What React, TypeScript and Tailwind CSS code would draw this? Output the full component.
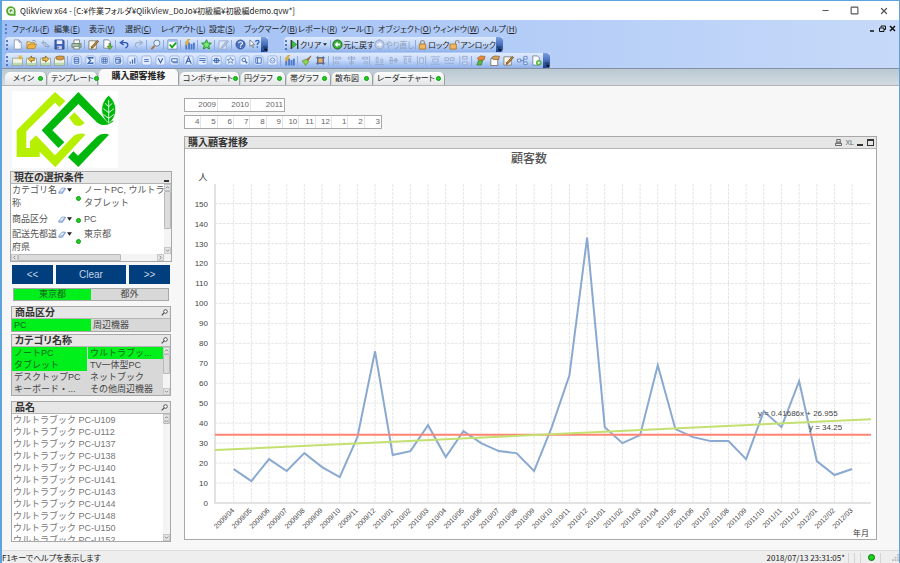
import { useState } from 'react'
import type { ReactNode } from 'react'
import { Minus, Square, X } from 'lucide-react'

const menus = [
  { label: 'ファイル', key: 'F', width: 'w-[42px]' },
  { label: '編集', key: 'E', width: 'w-[35px]' },
  { label: '表示', key: 'V', width: 'w-[36px]' },
  { label: '選択', key: 'C', width: 'w-[36px]' },
  { label: 'レイアウト', key: 'L', width: 'w-[48px]' },
  { label: '設定', key: 'S', width: 'w-[35px]' },
  { label: 'ブックマーク', key: 'B', width: 'w-[54px]' },
  { label: 'レポート', key: 'R', width: 'w-[43px]' },
  { label: 'ツール', key: 'T', width: 'w-[37px]' },
  { label: 'オブジェクト', key: 'O', width: 'w-[55px]' },
  { label: 'ウィンドウ', key: 'W', width: 'w-[50px]' },
  { label: 'ヘルプ', key: 'H', width: 'w-[41px]' },
]

const tabs = [
  { label: 'メイン', width: 'w-[42px]' },
  { label: 'テンプレート', width: 'w-[50px]' },
  { label: '購入顧客推移', width: 'w-[80px]' },
  { label: 'コンボチャート', width: 'w-[60px]' },
  { label: '円グラフ', width: 'w-[45px]' },
  { label: '帯グラフ', width: 'w-[44px]' },
  { label: '散布図', width: 'w-[41px]' },
  { label: 'レーダーチャート', width: 'w-[71px]' },
]

const months = [4, 5, 6, 7, 8, 9, 10, 11, 12, 1, 2, 3]

const products = ['109', '112', '137', '138', '140', '141', '143', '144', '148', '150', '152']

const customers = [
  17, 11, 22, 16, 25, 18, 13, 33, 76, 24, 26, 39, 23, 36, 30, 26, 25, 16,
  38, 64, 133, 38, 30, 34, 69, 37, 33, 31, 31, 22, 46, 38, 61, 21, 14, 17,
]

// ---- toolbar icons, all on a 12x12 grid ----

const boxed = (glyph: ReactNode) => (
  <>
    <rect x="1" y="1" width="10" height="10" rx="2" fill="#e3edff" stroke="#8aa8dc" strokeWidth=".8" />
    <g stroke="#3f69b5" fill="none" strokeWidth="1">{glyph}</g>
  </>
)

const sheet = (extra: ReactNode) => (
  <>
    <path d="M.5 3.500h11V11.500H.5z" fill="#f4f3df" stroke="#7d8a74" strokeWidth=".7" />
    <path d="M1 8.500h10V11H1z" fill="#b9d8b4" />
    {extra}
  </>
)

const align = (glyph: ReactNode) => (
  <g stroke="#8ea2c9" fill="#c9d8f3" strokeWidth=".8">{glyph}</g>
)

const icons: Record<string, ReactNode> = {
  newDoc: <path d="M2.500 1h5l2.500 2.500V11h-7.500zM7.500 1v2.500H10" fill="#fff" stroke="#7b8aa6" strokeWidth=".8" />,
  open: (
    <>
      <path d="M1 10V3h3l1 1h4v2" fill="#f7d98a" stroke="#a77c22" strokeWidth=".8" />
      <path d="M1 10.500l2-5h8.500l-2 5z" fill="#f2b640" stroke="#a77c22" strokeWidth=".8" />
      <path d="M7 2c1.500-1 3-.5 3.500 1" fill="none" stroke="#5d6f86" strokeWidth=".8" />
    </>
  ),
  reload: <path d="M4.500 1.500L2 4l2.500 2.500M2.500 4h4v2M7.500 5.500L10 8l-2.500 2.500M9.500 8h-4V6" fill="none" stroke="#8b9dbd" strokeWidth="1" />,
  save: (
    <>
      <path d="M1 1h9l1 1v9H1z" fill="#3f62b8" stroke="#23408a" strokeWidth=".8" />
      <path d="M3 1.500h6v4H3z" fill="#e9effb" />
      <path d="M3.500 7.500h5V11h-5z" fill="#c4cfe6" />
      <path d="M4.500 8.500v2" stroke="#23408a" />
    </>
  ),
  print: (
    <>
      <path d="M3.500 1h6L9 5H3z" fill="#fff" stroke="#5a6a60" strokeWidth=".8" />
      <path d="M1 5h10v4H1z" fill="#b4c6b0" stroke="#5c6e62" strokeWidth=".8" />
      <path d="M3 8h6v3H3z" fill="#f3f7f0" stroke="#5c6e62" strokeWidth=".8" />
      <path d="M8 6.500h2" stroke="#27a02c" />
    </>
  ),
  edit: (
    <>
      <path d="M1 2h8v9H1z" fill="#fdf9ec" stroke="#6e6a5c" strokeWidth=".8" />
      <path d="M2.500 8h3" stroke="#c79a55" strokeWidth=".8" />
      <path d="M4 8.500l6-7 1.500 1.200-6 6.800-2 .7z" fill="#d98b32" stroke="#3d2f18" strokeWidth=".7" />
    </>
  ),
  editGray: (
    <>
      <path d="M1 2h8v9H1z" fill="#dbe6f8" stroke="#8fa1c2" strokeWidth=".8" />
      <path d="M4 8.500l6-7 1.500 1.200-6 6.800-2 .7z" fill="#b7c6e2" stroke="#8496b8" strokeWidth=".7" />
    </>
  ),
  load: (
    <>
      <path d="M2 1h5l2 2v7H2z" fill="#fff" stroke="#5f6f8a" strokeWidth=".8" />
      <path d="M7.500 5v3H5.500l3 3.500L11.500 8h-2V5z" fill="#6dbd3a" stroke="#38761d" strokeWidth=".6" />
    </>
  ),
  undo: <path d="M5 1.500L1.500 4 5 6.500M2 4h5c3.500 0 3.500 4.500 0 6" fill="none" stroke="#3559b5" strokeWidth="1.500" />,
  redo: <path d="M7 1.500L10.500 4 7 6.500M10 4H5C1.500 4 1.500 8.500 5 10" fill="none" stroke="#a2b2cf" strokeWidth="1.300" />,
  find: (
    <>
      <path d="M5 7.500L1.500 11" stroke="#a9702c" strokeWidth="1.800" />
      <circle cx="7.500" cy="4.500" r="3.300" fill="#e3f0ff" stroke="#62789c" />
    </>
  ),
  check: (
    <>
      <path d="M1 1h10v10H1z" fill="#fff" stroke="#5b78b5" strokeWidth=".8" />
      <path d="M1 1h10v2H1z" fill="#9db7e8" />
      <path d="M3 6l2.500 3 4.500-5" fill="none" stroke="#17a517" strokeWidth="2" />
    </>
  ),
  chart: (
    <>
      <path d="M2.500 11.500V6M5.500 11.500V4M8.200 11.500V5.500M10.800 11.500V4" stroke="#4c76c8" strokeWidth="2" />
      <path d="M4.500 0L1 4.500h2L1.500 8 6 3.500H4L6.500 0z" fill="#f4b93c" stroke="#a8761a" strokeWidth=".4" />
    </>
  ),
  star: <path d="M6 .8l1.500 3.500 3.800.3-2.900 2.500.9 3.800L6 8.900l-3.300 2 .9-3.800L.7 4.600l3.800-.3z" fill="#7bea74" stroke="#128a1a" />,
  help: (
    <>
      <circle cx="6" cy="6" r="5" fill="#4a70c0" stroke="#2c4c96" strokeWidth=".8" />
      <path d="M3.800 4.500c.5-2 4.400-2 4.400 0C8.200 6 6 6 6 7.300M6 8.300v1.200" fill="none" stroke="#fff" strokeWidth="1.200" />
    </>
  ),
  whatsThis: (
    <>
      <path d="M1 1v7l1.700-1.500L4 9.500l1-.5-1.200-2.800H6z" fill="#fff" stroke="#444" strokeWidth=".6" />
      <path d="M7 3c.5-2 4-2 4 0 0 1.500-2 1.500-2 3.500M9 8v1.500" fill="none" stroke="#2f62c4" strokeWidth="1.400" />
    </>
  ),
  sheetNew: sheet(<path d="M9 0v5M6.500 2.500h5M7.200.7l3.600 3.600M10.800.7L7.200 4.300" stroke="#e6b21d" strokeWidth=".9" />),
  sheetLeft: sheet(<path d="M6 1L2.500 4.500 6 8V6h3V3H6z" fill="#f1b944" stroke="#6b4c11" strokeWidth=".7" />),
  sheetRight: sheet(<path d="M6 1l3.500 3.500L6 8V6H3V3h3z" fill="#f1b944" stroke="#6b4c11" strokeWidth=".7" />),
  sheetProps: sheet(<path d="M2 2l4-1 5 .5V4L8 5.500 3 5z" fill="#d9973f" stroke="#6b4c11" strokeWidth=".6" />),
  list: boxed(<path d="M3.500 3h5v6h-5zM3.500 5h5M3.500 7h5" />),
  sigma: boxed(<path d="M8.500 4V3h-5L6 6 3.500 9h5V8" strokeWidth="1.400" />),
  table: boxed(<path d="M3 3h6v6H3zM3 5h6M3 7h6M5 3v6M7 3v6" strokeWidth=".8" />),
  multi: boxed(<path d="M3 3h5v6H3zM3 5h5M6 6.500h3.500M5 7.500h3" />),
  bars: boxed(<path d="M3.500 9.500V7M6 9.500V5M8.500 9.500V3" strokeWidth="1.300" />),
  input: boxed(<path d="M3.500 5h5M3.500 7h5" />),
  gauge: boxed(<path d="M3.500 3.500L6 8.500l2.500-5" strokeWidth="1.300" />),
  button: boxed(<path d="M3 4h6v3.500H3zM4 8.500h6" />),
  textObj: boxed(<path d="M3 9.500L6 2.500l3 7M4 7h4" strokeWidth="1.300" />),
  lineObj: boxed(<path d="M2.500 4h7M2.500 6h7M6 8h3" />),
  slider: boxed(<path d="M2 6h8M4 4h4v4H4zM6 3v6" />),
  bookmark: boxed(<path d="M6 2.500l1 2.300 2.500.2-2 1.600.7 2.400L6 7.700 3.800 9l.7-2.400-2-1.600 2.500-.2z" strokeWidth=".7" />),
  searchObj: boxed(<><circle cx="5.200" cy="5.200" r="2" /><path d="M6.800 6.800L9 9" strokeWidth="1.500" /></>),
  container: boxed(<path d="M3 3h6v6H3zM5 3v6" />),
  custom: boxed(<><circle cx="6" cy="6" r="2.800" strokeWidth=".7" /><path d="M4.500 5.500L6 7l2-2" strokeWidth=".7" /></>),
  brush: (
    <>
      <path d="M11 1L6 5l1.500 1.500z" fill="#c97a2a" stroke="#7a4511" strokeWidth=".6" />
      <path d="M1 6.500l5-2 2.500 2.500L5 11.500c-1-2-2.500-3.500-4-5z" fill="#8fd14c" stroke="#4b7f22" strokeWidth=".6" />
    </>
  ),
  grid: (
    <>
      <path d="M3 3h6v6H3z" fill="#e6b064" stroke="#4a5a85" strokeWidth=".8" />
      <path d="M1 3h10M1 9h10M3 1v10M9 1v10" stroke="#4a5a85" strokeWidth=".8" />
    </>
  ),
  al0: align(<path d="M1.500 1v10M3.500 2.500h6v2h-6zM3.500 7.500h4v2h-4z" />),
  al1: align(<path d="M6 1v10M2.500 2.500h7v2h-7zM4 7.500h4v2H4z" />),
  al2: align(<path d="M10.500 1v10M2.500 2.500h6v2h-6zM4.500 7.500h4v2h-4z" />),
  al3: align(<path d="M1 10.500h10M2.500 2.500h2v6h-2zM7.500 4.500h2v4h-2z" />),
  al4: align(<path d="M1 6h10M2.500 2.500h2v7h-2zM7.500 4h2v4h-2z" />),
  al5: align(<path d="M1 1.500h10M2.500 3.500h2v6h-2zM7.500 3.500h2v4h-2z" />),
  al6: align(<path d="M1.500 1v10M10.500 1v10M4 3h4v6H4z" />),
  al7: align(<path d="M1 2h10M1 10h10M3 4.500h6v3H3z" />),
  al8: align(<path d="M1 3h4v3H1zM7 3h4v3H7zM1 9h10" />),
  al9: align(<path d="M2 1v10M5 1.500h5v3H5zM5 7.500h5v3H5z" />),
  user: (
    <>
      <path d="M2 11l2-6 5-1-2 7z" fill="#5bb548" stroke="#2f6b22" strokeWidth=".6" />
      <path d="M2.500 3.500L6 1l5 .5L10 5 5 6z" fill="#e8893a" stroke="#8a4815" strokeWidth=".6" />
    </>
  ),
  docProps: (
    <>
      <path d="M2 4h7.500v7.500H2z" fill="#fff" stroke="#5a4a33" strokeWidth=".7" />
      <path d="M3 2.500L6.500 1l5 .5-1 3.500H5z" fill="#d9a05a" stroke="#5a3d15" strokeWidth=".6" />
    </>
  ),
  linkTables: (
    <g stroke="#4a6fb5" fill="#dfeaff" strokeWidth=".8">
      <path d="M4 6h3M7 3.500v5" />
      <path d="M.5 4.500h3.500v3H.5zM7.500 1.500H11v3H7.500zM7.500 7.500H11v3H7.500z" />
    </g>
  ),
  export: (
    <>
      <path d="M2 1h5l2 2v8H2z" fill="#fff" stroke="#5f6f8a" strokeWidth=".8" />
      <circle cx="8.500" cy="8.500" r="3" fill="#4fb53a" />
      <path d="M8.500 7v3M7 8.500h3" stroke="#fff" />
    </>
  ),
  clear: (
    <>
      <path d="M2.500 1v10M9.500 1v10" stroke="#2d3b33" strokeWidth="1.500" />
      <path d="M3.500 2L8.500 6l-5 4z" fill="#3fbf45" stroke="#1f7a2a" strokeWidth=".6" />
    </>
  ),
  back: (
    <>
      <circle cx="6" cy="6" r="5" fill="#35b135" stroke="#1b5e22" />
      <path d="M6 2.800L2.800 6 6 9.200V7.200h3V4.800H6z" fill="#fff" />
    </>
  ),
  forward: (
    <>
      <circle cx="6" cy="6" r="5" fill="#b9c9e6" stroke="#8ea1c4" />
      <path d="M6 2.800L9.200 6 6 9.200V7.200H3V4.800h3z" fill="#eef4ff" />
    </>
  ),
  lock: (
    <>
      <path d="M4 6V3.500c0-2.500 4-2.500 4 0V6" fill="none" stroke="#8c8c8c" strokeWidth="1.300" />
      <path d="M2.500 5.500h7V11h-7z" fill="#efb860" stroke="#a86a14" strokeWidth=".8" />
    </>
  ),
  unlock: (
    <>
      <path d="M7 6V3.500c0-2.500 4-2.500 4 0V5" fill="none" stroke="#8c8c8c" strokeWidth="1.300" />
      <path d="M1 5.500h7V11H1z" fill="#efb860" stroke="#a86a14" strokeWidth=".8" />
    </>
  ),
}

// '|' draws a separator
const standardBar = [
  'newDoc', 'open', 'reload', 'save', '|', 'print', '|', 'edit', 'load', '|', 'undo', 'redo', '|',
  'find', '|', 'check', '|', 'chart', '|', 'star', '|', 'editGray', '|', 'help', 'whatsThis',
]

const designBar = [
  'sheetNew', 'sheetLeft', 'sheetRight', 'sheetProps', '|',
  'list', 'sigma', 'table', 'multi', 'bars', 'input', 'gauge', 'button', 'textObj', 'lineObj',
  'slider', 'bookmark', 'searchObj', 'container', 'custom', '|', 'chart', '|', 'brush', 'grid', '|',
  'al0', 'al1', 'al2', 'al3', 'al4', 'al5', 'al6', 'al7', 'al8', 'al9', '|',
  'user', 'docProps', 'edit', 'linkTables', 'export',
]

function Icon({ name }: { name: string }) {
  return <svg viewBox="0 0 12 12" className="w-[11px] h-[11px] shrink-0" aria-hidden="true">{icons[name]}</svg>
}

function Separator() {
  return <span className="w-[3px] flex justify-center shrink-0"><span className="w-px h-[10px] bg-[#8faae0]" /></span>
}

function Toolbar({ children }: { children: ReactNode }) {
  return (
    <div className="flex items-center h-[15px] rounded-l-sm bg-linear-to-b from-[#dfeafd] via-[#c3d8fa] to-[#8fb0ea]">
      <span className="w-[4px] h-[10px] ml-px border-l-2 border-dotted border-[#5577bd] shrink-0" />
      {children}
      <span className="w-[7px] h-full flex items-end justify-center rounded-r-sm bg-linear-to-b from-[#7ba0e0] to-[#143f92] shrink-0">
        <svg viewBox="0 0 6 6" className="w-[6px] h-[6px]"><path d="M1 1h4M2 3h3v2.500z" stroke="#111" strokeWidth=".6" fill="#111" /></svg>
      </span>
    </div>
  )
}

function IconBar({ names }: { names: string[] }) {
  return (
    <Toolbar>
      {names.map((name, i) =>
        name === '|' ? <Separator key={i} /> : (
          <button key={i} type="button" aria-label={name} className="w-[14px] h-[14px] flex items-center justify-center shrink-0">
            <Icon name={name} />
          </button>
        )
      )}
    </Toolbar>
  )
}

function Dot() {
  return <span className="w-[5px] h-[5px] rounded-full bg-[#17d417] border border-[#0f9a14] shrink-0" />
}

function PanelHeader({ title, children }: { title: string; children?: ReactNode }) {
  return (
    <header className="h-[12px] flex items-center justify-between pl-[3px] pr-[2px] bg-[#e6e6e6] border-b border-[#b4b4b4] text-[#333]">
      <h2 className="text-[10px] leading-[11px] font-bold [font-feature-settings:'palt']">{title}</h2>
      <div className="flex items-center gap-[3px]">{children}</div>
    </header>
  )
}

function SearchButton() {
  return (
    <button type="button" aria-label="検索">
      <svg viewBox="0 0 7 7" className="w-[7px] h-[7px]">
        <circle cx="4.500" cy="2.500" r="1.800" fill="#fff" stroke="#444" strokeWidth=".9" />
        <path d="M3.200 3.800L.7 6.300" stroke="#444" strokeWidth="1.100" />
      </svg>
    </button>
  )
}

function ScrollArrow({ d }: { d: string }) {
  return (
    <span className="w-[7px] h-[7px] flex items-center justify-center bg-[#e4e4e4] border border-[#c8c8c8] shrink-0">
      <svg viewBox="0 0 6 6" className="w-[5px] h-[5px]"><path d={d} fill="none" stroke="#777" /></svg>
    </span>
  )
}

function VerticalScroll({ thumb }: { thumb: string }) {
  return (
    <div className="w-[7px] flex flex-col justify-between bg-[#f4f4f4] shrink-0">
      <div>
        <ScrollArrow d="M1 4l2-2 2 2" />
        <div className={`${thumb} bg-[#dcdcdc] border border-[#b8b8b8] rounded-[1px]`} />
      </div>
      <ScrollArrow d="M1 2l2 2 2-2" />
    </div>
  )
}

function ListItem({ label, on }: { label: string; on?: boolean }) {
  return (
    <button
      type="button"
      className={`h-[12px] px-[2px] text-left text-[9px] leading-[12px] whitespace-nowrap overflow-hidden ${on ? 'bg-[#00f01c] text-[#14641c]' : 'bg-[#d8d8d8] text-[#444]'}`}
    >
      {label}
    </button>
  )
}

const conditions = [
  { field: 'カテゴリ名称', values: ['ノートPC, ウルトラブック,', 'タブレット'], height: 'h-[29px]' },
  { field: '商品区分', values: ['PC'], height: 'h-[15px]' },
  { field: '配送先都道府県', values: ['東京都'], height: 'h-[26px]' },
]

function CurrentSelections() {
  return (
    <section className="border border-[#a8a8a8] bg-white">
      <PanelHeader title="現在の選択条件">
        <button type="button" aria-label="最小化" className="w-[5px] h-[8px] border-b-2 border-[#333]" />
      </PanelHeader>
      <div className="flex">
        <table className="flex-1 min-w-0 text-[9px] leading-[13px] text-[#555] block h-[70px]">
          <tbody className="block">
            {conditions.map(c => (
              <tr key={c.field} className={`flex ${c.height}`}>
                <th scope="row" className="w-[47px] pl-px text-left font-normal">{c.field}</th>
                <td className="w-[14px] flex gap-px pt-[3px]">
                  <svg viewBox="0 0 10 8" className="w-[8px] h-[7px] shrink-0">
                    <path d="M1 6l4-5h4L5.500 6zM1 6v1.500h4.500V6M9 1v1.500L5.500 7.500" fill="#e6f0ff" stroke="#5e83c2" strokeWidth=".8" />
                  </svg>
                  <svg viewBox="0 0 6 4" className="w-[5px] h-[4px] mt-px shrink-0"><path d="M0 0h6L3 4z" fill="#222" /></svg>
                </td>
                <td className="w-[12px] flex items-center justify-center"><Dot /></td>
                <td className="w-[80px] overflow-hidden">
                  {c.values.map(v => <div key={v} className="whitespace-nowrap">{v}</div>)}
                </td>
              </tr>
            ))}
          </tbody>
        </table>
        <VerticalScroll thumb="h-[38px]" />
      </div>
      <div className="flex items-center h-[7px] bg-[#f4f4f4] pr-[7px]">
        <ScrollArrow d="M4 1L2 3l2 2" />
        <div className="w-[103px] h-[7px] bg-[#dcdcdc] border border-[#b8b8b8] rounded-[1px]" />
        <span className="flex-1" />
        <ScrollArrow d="M2 1l2 2-2 2" />
      </div>
    </section>
  )
}

function Logo() {
  return (
    <div className="w-[106px] h-[77px] ml-[2px] bg-white">
      <svg viewBox="6 9 318 231" className="w-full" role="img" aria-label="ロゴ">
        <path d="M20 127L135 12l31 27-18 18-13-13-86 86v50h11v-20l18-18 57 60 55-57c10-9 28-11 36-5l-90 98-47-47v16H20z" fill="#b6f000" />
        <path d="M177 89l16-16 31 32c-12 12-26 10-33 3z" fill="#b6f000" />
        <path d="M205 12l70 72c6 10 18 16 37 14-14 14-34 18-50 6L205 48l-78 79 36 36-18 17-50-53z" fill="#00b80c" />
        <path d="M174 208l16-18 14 13 56-56c9-10 28-13 37-7l-92 97z" fill="#00b80c" />
        <path d="M296 22c28 24 28 62 1 84-29-22-29-60-1-84z" fill="#00b80c" stroke="#fff" strokeWidth="2" />
        <path d="M296 36v68M296 56l-11-10M296 56l11-10M296 74l-16-12M296 74l16-12M296 91l-16-12M296 91l16-12" stroke="#fff" strokeWidth="2.500" />
      </svg>
    </div>
  )
}

function Sidebar() {
  const [area, setArea] = useState('東京都')
  const navClass = 'h-[19px] bg-[#003e7e] text-[#c3d3e4] text-[10px] leading-[18px]'

  return (
    <aside className="w-[162px] shrink-0 flex flex-col">
      <Logo />
      <div className="mt-[3px]"><CurrentSelections /></div>

      <div className="flex gap-[3px] mt-[3px] px-[2px]">
        <button type="button" className={`w-[41px] ${navClass}`}>&lt;&lt;</button>
        <button type="button" className={`flex-1 ${navClass}`}>Clear</button>
        <button type="button" className={`w-[41px] ${navClass}`}>&gt;&gt;</button>
      </div>

      <div className="flex h-[13px] mt-[4px] mx-[3px] border border-[#a8a8a8]">
        {['東京都', '都外'].map(name => (
          <button
            key={name}
            type="button"
            onClick={() => setArea(name)}
            className={`flex-1 text-[9px] leading-[11px] ${area === name ? 'bg-[#00f01c] text-[#14641c]' : 'bg-[#d8d8d8] text-[#444]'}`}
          >
            {name}
          </button>
        ))}
      </div>

      <section className="mt-[5px] mx-px border border-[#a8a8a8] bg-[#d8d8d8]">
        <PanelHeader title="商品区分"><SearchButton /></PanelHeader>
        <div className="grid grid-cols-2">
          <ListItem label="PC" on />
          <ListItem label="周辺機器" />
        </div>
      </section>

      <section className="mt-[2px] mx-px border border-[#a8a8a8] bg-[#d8d8d8]">
        <PanelHeader title="カテゴリ名称"><SearchButton /></PanelHeader>
        <div className="flex">
          <div className="flex-1 grid grid-cols-2 gap-x-px">
            <ListItem label="ノートPC" on />
            <ListItem label="ウルトラブッ..." on />
            <ListItem label="タブレット" on />
            <ListItem label="TV一体型PC" />
            <ListItem label="デスクトップPC" />
            <ListItem label="ネットブック" />
            <ListItem label="キーボード・..." />
            <ListItem label="その他周辺機器" />
          </div>
          <VerticalScroll thumb="h-[20px]" />
        </div>
      </section>

      <section className="mt-[5px] mx-px border border-[#a8a8a8] bg-white">
        <PanelHeader title="品名"><SearchButton /></PanelHeader>
        <div className="flex h-[127px]">
          <ul className="flex-1 overflow-hidden text-[9px] leading-[12px] text-[#777]">
            {products.map(no => (
              <li key={no} className="pl-px">ウルトラブック PC-U{no}</li>
            ))}
          </ul>
          <VerticalScroll thumb="h-[3px]" />
        </div>
      </section>
    </aside>
  )
}

// plot geometry
const left = 30
const right = 686
const base = 354
const top = 35
const xAt = (i: number) => 48.700 + i * 17.670
const yAt = (v: number) => base - v * 1.996

function CustomerChart() {
  const labels = customers.map((_, i) => {
    const m = i + 3
    return `${2009 + Math.floor(m / 12)}/${String((m % 12) + 1).padStart(2, '0')}`
  })
  const ticks = Array.from({ length: 16 }, (_, i) => i * 10)

  return (
    <svg viewBox="0 0 691 390" className="w-full h-auto block" role="img" aria-label="顧客数">
      <text x="344" y="14" textAnchor="middle" fontSize="12" fontWeight="500" fill="#555">顧客数</text>
      <text x="18" y="31" textAnchor="middle" fontSize="9" fill="#444">人</text>

      <g stroke="#e6e6e6" strokeDasharray="3 1">
        {ticks.slice(1).map(t => <line key={t} x1={left} x2={right} y1={yAt(t)} y2={yAt(t)} />)}
        {labels.map((l, i) => <line key={l} x1={xAt(i)} x2={xAt(i)} y1={top} y2={base} />)}
      </g>
      <path d={`M${left} ${top}V${base}H${right}`} fill="none" stroke="#e2e2e2" strokeWidth="2" />

      <g fontSize="8" fill="#444" textAnchor="end">
        {ticks.map(t => <text key={t} x="23" y={yAt(t) + 3}>{t}</text>)}
      </g>
      <g fontSize="7" fill="#444" textAnchor="end">
        {labels.map((l, i) => (
          <text key={l} transform={`translate(${xAt(i) + 1} ${base + 8}) rotate(-45)`}>{l}</text>
        ))}
      </g>
      <text x="684" y="387" textAnchor="end" fontSize="8" fill="#333">年月</text>

      <polyline
        points={customers.map((v, i) => `${xAt(i)},${yAt(v)}`).join(' ')}
        fill="none"
        stroke="#8aa9d0"
        strokeWidth="2"
      />
      <line x1={left} x2={right} y1={yAt(34.25)} y2={yAt(34.25)} stroke="#ff8473" strokeWidth="2" />
      <line x1={left} x2={right} y1={yAt(26.5)} y2={yAt(42)} stroke="#c3e070" strokeWidth="2" />

      <g fontSize="8" fill="#444">
        <text x="573" y="267">y = 0.41686x + 26.955</text>
        <text x="624" y="281">y = 34.25</text>
      </g>
    </svg>
  )
}

export default function App() {
  const [activeTab, setActiveTab] = useState('購入顧客推移')

  return (
    <div className="min-h-screen flex flex-col border border-l-2 border-[#5fa3dd] bg-[#f7f7f7] font-['Liberation_Sans','Noto_Sans_CJK_JP',sans-serif] text-[#222] overflow-hidden">
      {/* Title bar */}
      <header className="h-[19px] flex items-center bg-white pl-[4px] pr-[10px] shrink-0">
        <svg viewBox="0 0 12 12" className="w-[10px] h-[10px]">
          <path d="M6 .2a5.800 5.800 0 1 0 0 11.600h5.500V6A5.700 5.700 0 0 0 6 .2z" fill="#51a92b" />
          <circle cx="6" cy="5.800" r="2.700" fill="none" stroke="#fff" strokeWidth="1.500" />
          <path d="M6.500 6.500L9 9.500" stroke="#fff" strokeWidth="1.500" />
        </svg>
        <h1 className="ml-[4px] flex-1 text-[8px] leading-[14px] font-['Noto_Sans_CJK_JP',sans-serif] [font-feature-settings:'palt']">
          QlikView x64 - [C:¥作業フォルダ¥QlikView_DoJo¥初級編¥初級編demo.qvw*]
        </h1>
        <div className="flex gap-[20px] text-[#555]">
          <button type="button" aria-label="最小化"><Minus className="w-[9px] h-[9px]" strokeWidth={3} /></button>
          <button type="button" aria-label="最大化"><Square className="w-[9px] h-[9px]" strokeWidth={3} /></button>
          <button type="button" aria-label="閉じる"><X className="w-[10px] h-[10px]" strokeWidth={3} /></button>
        </div>
      </header>

      {/* Menu and toolbars */}
      <div className="bg-linear-to-r from-[#9bbcf4] to-[#c6d9f9] border-b border-[#8790a3] text-[8px] font-['Noto_Sans_CJK_JP',sans-serif] [font-feature-settings:'palt'] shrink-0">
        <div className="flex h-[17px] items-center justify-between pl-[3px] pr-[3px]">
          <nav className="flex items-center">
            <span className="w-[7px] h-[10px] border-l-2 border-dotted border-[#5c7fc6]" />
            {menus.map(m => (
              <button key={m.key} type="button" className={`${m.width} text-left whitespace-nowrap leading-[12px]`}>
                {m.label}(<u>{m.key}</u>)
              </button>
            ))}
          </nav>
          <div className="flex items-center gap-[3px]">
            <button type="button" aria-label="子ウィンドウを最小化"><svg viewBox="0 0 7 7" className="w-[7px] h-[7px]"><path d="M1 6h4" stroke="#111" strokeWidth="1.500" /></svg></button>
            <button type="button" aria-label="子ウィンドウを元に戻す"><svg viewBox="0 0 7 7" className="w-[7px] h-[7px]"><path d="M2 2.500V1h4.500v3.500H5M.5 3H5v3.500H.5z" fill="none" stroke="#111" /></svg></button>
            <button type="button" aria-label="子ウィンドウを閉じる"><svg viewBox="0 0 7 7" className="w-[7px] h-[7px]"><path d="M1 1l5 5M6 1L1 6" stroke="#111" strokeWidth="1.500" /></svg></button>
          </div>
        </div>
        <div className="flex gap-[16px] pl-[3px]">
          <IconBar names={standardBar} />
          <Toolbar>
            <button type="button" className="flex items-center whitespace-nowrap"><Icon name="clear" />クリア
              <svg viewBox="0 0 6 4" className="w-[4px] h-[3px] mx-[2px] shrink-0"><path d="M0 0h6L3 4z" fill="#222" /></svg>
            </button>
            <Separator />
            <button type="button" className="flex items-center whitespace-nowrap"><Icon name="back" />元に戻す</button>
            <button type="button" disabled className="flex items-center whitespace-nowrap text-[#8c9cb8]"><Icon name="forward" />やり直し</button>
            <Separator />
            <button type="button" className="flex items-center whitespace-nowrap"><Icon name="lock" />ロック</button>
            <button type="button" className="flex items-center whitespace-nowrap"><Icon name="unlock" />アンロック</button>
          </Toolbar>
        </div>
        <div className="flex pl-[3px] pt-px">
          <IconBar names={designBar} />
        </div>
      </div>

      {/* Sheet tabs */}
      <nav className="h-[17px] flex items-end gap-px pl-[3px] bg-linear-to-b from-[#b9c8d2] to-[#d3dbe1] border-b border-[#b4b4b4] shrink-0 [font-feature-settings:'palt']">
        {tabs.map(tab => {
          const active = tab.label === activeTab
          return (
            <button
              key={tab.label}
              type="button"
              onClick={() => setActiveTab(tab.label)}
              className={`${tab.width} flex items-center whitespace-nowrap rounded-t-[5px] border-r border-[#9a9fa3] shrink-0 ${active ? 'h-[16px] justify-center bg-[#f9f9f9] text-[9px] font-bold' : 'h-[13px] justify-between px-[3px] first:pl-[8px] bg-linear-to-b from-[#fdfdfd] to-[#e3e5e6] text-[8px]'}`}
            >
              {tab.label}
              {!active && <Dot />}
            </button>
          )
        })}
      </nav>

      <main className="flex-1 flex gap-[12px] pl-[8px] pr-[22px] pt-[5px] pb-[8px]">
        <Sidebar />
        <div className="flex-1 min-w-0 pt-[7px]">
          <ul className="w-[101px] h-[14px] grid grid-cols-3 border border-[#a8a8a8] bg-white text-[8px] leading-[12px] text-[#666] text-right">
            {[2009, 2010, 2011].map(y => <li key={y} className="pr-px border-r border-[#e4e4e4] last:border-0">{y}</li>)}
          </ul>
          <ul className="w-[198px] h-[14px] mt-[3px] grid grid-cols-12 border border-[#a8a8a8] bg-white text-[8px] leading-[12px] text-[#666] text-right">
            {months.map(m => <li key={m} className="pr-px border-r border-[#e4e4e4] last:border-0">{m}</li>)}
          </ul>

          <section className="mt-[7px] border border-[#a8a8a8] bg-white">
            <PanelHeader title="購入顧客推移">
              <button type="button" aria-label="印刷"><svg viewBox="0 0 8 8" className="w-[7px] h-[7px]"><path d="M2 .5h4v3H2zM.5 7.500V5h7v2.500zM2 5V3.500M6 5V3.500" fill="none" stroke="#555" /></svg></button>
              <button type="button" className="text-[7px] leading-[9px] text-[#666]">XL</button>
              <button type="button" aria-label="最小化" className="w-[6px] h-[7px] border-b-2 border-[#333]" />
              <button type="button" aria-label="最大化" className="w-[7px] h-[7px] ml-px border border-t-2 border-[#333]" />
            </PanelHeader>
            <CustomerChart />
          </section>
        </div>
      </main>

      {/* Status bar */}
      <footer className="h-[14px] flex items-center justify-between bg-[#eee] border-t border-[#ddd] text-[8px] leading-[12px] shrink-0 font-['Noto_Sans_CJK_JP',sans-serif] [font-feature-settings:'palt']">
        <span>F1キーでヘルプを表示します</span>
        <div className="flex items-center">
          <span className="mr-[3px]">2018/07/13 23:31:05*</span>
          <span className="w-[6px] h-[10px] border-l border-[#d4d4d4]" />
          <span className="w-[6px] h-[10px] border-l border-[#d4d4d4]" />
          <span className="w-[8px] h-[10px] border-l border-[#d4d4d4]" />
          <span className="w-[7px] h-[7px] rounded-full bg-[#17d417] border border-[#0a6b10]" />
          <span className="w-[12px] h-[10px] ml-[5px] border-l border-[#d4d4d4]" />
          <svg viewBox="0 0 8 8" className="w-[7px] h-[7px]"><path d="M6 0h2v2H6zM3 3h2v2H3zM6 3h2v2H6zM0 6h2v2H0zM3 6h2v2H3zM6 6h2v2H6z" fill="#bbb" /></svg>
        </div>
      </footer>
    </div>
  )
}
